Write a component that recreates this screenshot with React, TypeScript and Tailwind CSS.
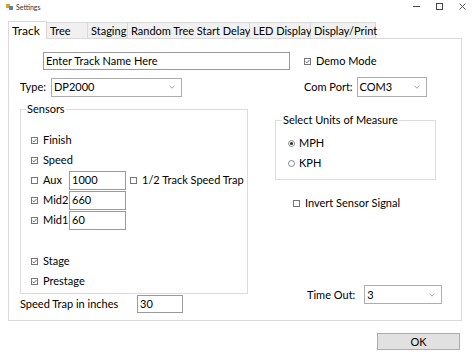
import React from 'react';

function Check({ checked }: { checked?: boolean }) {
  return (
    <svg width="7" height="7" viewBox="0 0 7 7" className="shrink-0">
      <rect x="0.5" y="0.5" width="6" height="6" fill="white" stroke="#767676" />
      {checked && <path d="M1.6 3.6 L2.9 4.9 L5.5 2" fill="none" stroke="#555" strokeWidth="0.9" />}
    </svg>
  );
}

function Radio({ checked }: { checked?: boolean }) {
  return (
    <svg width="7" height="7" viewBox="0 0 7 7" className="shrink-0">
      <circle cx="3.5" cy="3.5" r="3" fill="white" stroke="#6d6d6d" strokeWidth="0.8" />
      {checked && <circle cx="3.5" cy="3.5" r="1.6" fill="#333" />}
    </svg>
  );
}

function Chevron() {
  return (
    <svg width="6" height="4" viewBox="0 0 6 4" className="shrink-0">
      <path d="M0.5 0.8 L3 3.2 L5.5 0.8" fill="none" stroke="#8a8a8a" strokeWidth="0.8" />
    </svg>
  );
}

function TextBox({ value, className }: { value: string; className: string }) {
  return (
    <div className={`flex items-center border border-[#9a9a9a] bg-white pl-[2px] whitespace-nowrap ${className}`}>
      {value}
    </div>
  );
}

function Combo({ value, className }: { value: string; className: string }) {
  return (
    <div className={`flex items-center justify-between border border-[#adadad] bg-white pl-[2px] pr-[6px] ${className}`}>
      <span>{value}</span>
      <Chevron />
    </div>
  );
}

function CheckRow({ label, checked }: { label: string; checked?: boolean }) {
  return (
    <div className="flex items-center gap-[5px] whitespace-nowrap">
      <Check checked={checked} />
      <span>{label}</span>
    </div>
  );
}

const tabs = [
  { label: 'Track', w: 'w-[39px]' },
  { label: 'Tree', w: 'w-[41px]' },
  { label: 'Staging', w: 'w-[40px]' },
  { label: 'Random Tree Start Delay', w: 'w-[122px]' },
  { label: 'LED Display', w: 'w-[61px]' },
  { label: 'Display/Print', w: 'w-[65px]' },
];

export default function App() {
  return (
    <div className="w-[474px] h-[357px] bg-white overflow-hidden text-black text-[11px] leading-[14px] font-['Lato',sans-serif]">
      {/* Title bar */}
      <div className="h-[21px] flex items-start pt-[3px] pl-[6px] pr-[8px]">
        <svg width="7" height="6" viewBox="0 0 7 6" className="mt-[1px]">
          <rect x="0" y="0" width="4" height="4" fill="#d9a520" />
          <rect x="3" y="2" width="4" height="4" fill="#5b7fc4" />
        </svg>
        <span className="ml-[3px] text-[7px] leading-[9px] text-[#333]">Settings</span>
        <div className="ml-auto flex items-center gap-[16px] text-[#333] text-[10px] leading-[10px]">
          <span className="w-[7px] h-px bg-[#444]" />
          <span className="w-[7px] h-[7px] border border-[#444]" />
          <svg width="7" height="7" viewBox="0 0 7 7">
            <path d="M0.5 0.5 L6.5 6.5 M6.5 0.5 L0.5 6.5" stroke="#444" strokeWidth="0.9" />
          </svg>
        </div>
      </div>

      {/* Tabs */}
      <div className="flex items-end h-[17px] ml-[8px]">
        {tabs.map((t, i) => (
          <div
            key={t.label}
            className={`${t.w} flex items-center whitespace-nowrap border-[#d9d9d9] ${
              i === 0
                ? 'h-[18px] bg-white border-l border-t border-r -mb-px relative z-10 pl-[3px] text-[12px]'
                : 'h-[16px] bg-[#f0f0f0] border-t border-r pl-[3px]'
            }`}
          >
            {t.label}
          </div>
        ))}
      </div>

      {/* Tab page */}
      <div className="ml-[8px] w-[454px] h-[283px] border border-[#d9d9d9] bg-white flex flex-col">
        {/* Track name + Demo mode */}
        <div className="flex items-center mt-[13px] h-[18px]">
          <div className="w-[295px]">
            <TextBox value="Enter Track Name Here" className="ml-[34px] w-[247px] h-[18px]" />
          </div>
          <CheckRow label="Demo Mode" checked />
        </div>

        {/* Type + Com Port */}
        <div className="flex items-center mt-[7px] h-[20px]">
          <div className="w-[295px] flex items-center pl-[11px] gap-[5px]">
            <span>Type:</span>
            <Combo value="DP2000" className="w-[131px] h-[19px]" />
          </div>
          <div className="flex items-center gap-[4px]">
            <span>Com Port:</span>
            <Combo value="COM3" className="w-[70px] h-[20px]" />
          </div>
        </div>

        <div className="flex items-start mt-[5px] pl-[11px]">
          {/* Left column */}
          <div className="w-[228px] flex flex-col">
            <fieldset className="h-[192px] border border-[#dcdcdc] pl-[10px] pt-[14px]">
              <legend className="-ml-[5px] px-[1px]">Sensors</legend>
              <div className="flex flex-col">
                <div className="h-[20px] flex items-center">
                  <CheckRow label="Finish" checked />
                </div>
                <div className="h-[20px] flex items-center">
                  <CheckRow label="Speed" checked />
                </div>
                <div className="h-[20px] flex items-center">
                  <div className="w-[38px]">
                    <CheckRow label="Aux" />
                  </div>
                  <TextBox value="1000" className="w-[57px] h-[19px]" />
                  <div className="ml-[4px]">
                    <CheckRow label="1/2 Track Speed Trap" />
                  </div>
                </div>
                <div className="h-[20px] flex items-center">
                  <div className="w-[38px]">
                    <CheckRow label="Mid2" checked />
                  </div>
                  <TextBox value="660" className="w-[57px] h-[19px]" />
                </div>
                <div className="h-[20px] flex items-center">
                  <div className="w-[38px]">
                    <CheckRow label="Mid1" checked />
                  </div>
                  <TextBox value="60" className="w-[57px] h-[19px]" />
                </div>
                <div className="h-[20px] flex items-center mt-[21px]">
                  <CheckRow label="Stage" checked />
                </div>
                <div className="h-[20px] flex items-center">
                  <CheckRow label="Prestage" checked />
                </div>
              </div>
            </fieldset>
            <div className="flex items-center mt-[1px]">
              <span className="w-[117px]">Speed Trap in inches</span>
              <TextBox value="30" className="w-[46px] h-[18px]" />
            </div>
          </div>

          {/* Right column */}
          <div className="ml-[27px] flex flex-col mt-[11px]">
            <fieldset className="w-[161px] h-[67px] border border-[#dcdcdc] pl-[12px] pt-[6px]">
              <legend className="-ml-[6px] px-[1px]">Select Units of Measure</legend>
              <div className="h-[20px] flex items-center gap-[4px]">
                <Radio checked />
                <span>MPH</span>
              </div>
              <div className="h-[20px] flex items-center gap-[4px]">
                <Radio />
                <span>KPH</span>
              </div>
            </fieldset>
            <div className="h-[20px] flex items-center mt-[13px] ml-[18px]">
              <CheckRow label="Invert Sensor Signal" />
            </div>
            <div className="flex items-center mt-[72px] ml-[32px] gap-[9px]">
              <span>Time Out:</span>
              <Combo value="3" className="w-[78px] h-[19px]" />
            </div>
          </div>
        </div>
      </div>

      {/* Buttons */}
      <div className="flex justify-end mt-[12px] pr-[14px]">
        <button className="w-[83px] h-[17px] bg-[#e1e1e1] border border-[#adadad] flex items-center justify-center">
          OK
        </button>
      </div>
    </div>
  );
}
